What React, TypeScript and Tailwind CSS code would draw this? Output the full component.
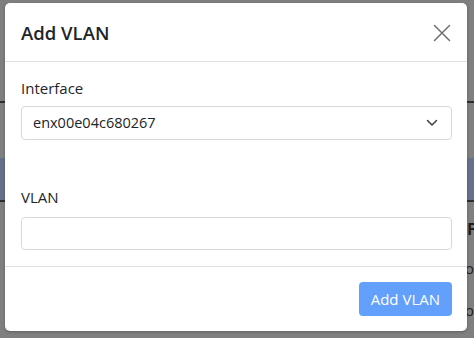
import React from "react";

export default function App() {
  const font = { fontFamily: '"Open Sans", "Noto Sans", sans-serif' };
  return (
    <div className="relative w-[474px] h-[338px] overflow-hidden bg-[#7f7f7f]" style={font}>
      {/* page behind the overlay */}
      <div className="flex flex-col">
        <div className="h-[101px]" />
        <div className="h-[2px] bg-[#2e2e2e]" />
        <div className="h-[55px]" />
        <div className="h-[42px] bg-[#66708a]" />
        <div className="h-[2px] bg-[#2e2e2e]" />
        <div className="pl-[467px] pt-[17px] text-[16px] font-bold leading-[20px] text-[#1e1e1e]">F</div>
        <div className="pl-[465px] pt-[19px] text-[15px] leading-[20px] text-[#1e1e1e]">o</div>
        <div className="pl-[465px] pt-[22px] text-[15px] leading-[20px] text-[#1e1e1e]">o</div>
      </div>

      {/* modal */}
      <div className="absolute left-[5px] top-[3px] w-[462px] h-[328px] bg-white rounded-[5px] shadow-[0_1px_3px_rgba(0,0,0,0.25)] flex flex-col">
        <div className="h-[59px] flex items-center justify-between pl-4 pr-[14px] border-b border-[#dee2e6] shrink-0">
          <div className="text-[18.5px] font-semibold text-[#212529] leading-[24px] pt-[1px]">Add VLAN</div>
          <svg width="18" height="18" viewBox="0 0 18 18" className="mr-[2px] mt-[2px]">
            <path d="M1.5 1.5 L16.5 16.5 M16.5 1.5 L1.5 16.5" stroke="#707070" strokeWidth="1.5" strokeLinecap="round" />
          </svg>
        </div>
        <div className="flex flex-col pl-4 pr-[15px] pt-[14px] pb-4 border-b border-[#dee2e6] shrink-0">
          <label className="text-[15px] leading-[24px] text-[#212529]">Interface</label>
          <div className="mt-[6px] h-[34px] border border-[#d6d9dc] rounded-[4px] flex items-center justify-between pl-[11px] pr-[13px]">
            <span className="text-[14.5px] text-[#212529]">enx00e04c680267</span>
            <svg width="12" height="8" viewBox="0 0 12 8">
              <path d="M1.5 1.5 L6 6 L10.5 1.5" stroke="#3a3f45" strokeWidth="1.5" fill="none" strokeLinecap="round" strokeLinejoin="round" />
            </svg>
          </div>
          <label className="mt-[45px] text-[15px] leading-[24px] text-[#212529]">VLAN</label>
          <div className="mt-[8px] h-[33px] border border-[#d6d9dc] rounded-[4px]" />
        </div>
        <div className="flex-1 flex items-start justify-end pl-4 pr-[15px] pt-[15px]">
          <button className="h-[34px] px-3 rounded-[4px] bg-[#62a0fc] text-white text-[15px]">Add VLAN</button>
        </div>
      </div>
    </div>
  );
}
